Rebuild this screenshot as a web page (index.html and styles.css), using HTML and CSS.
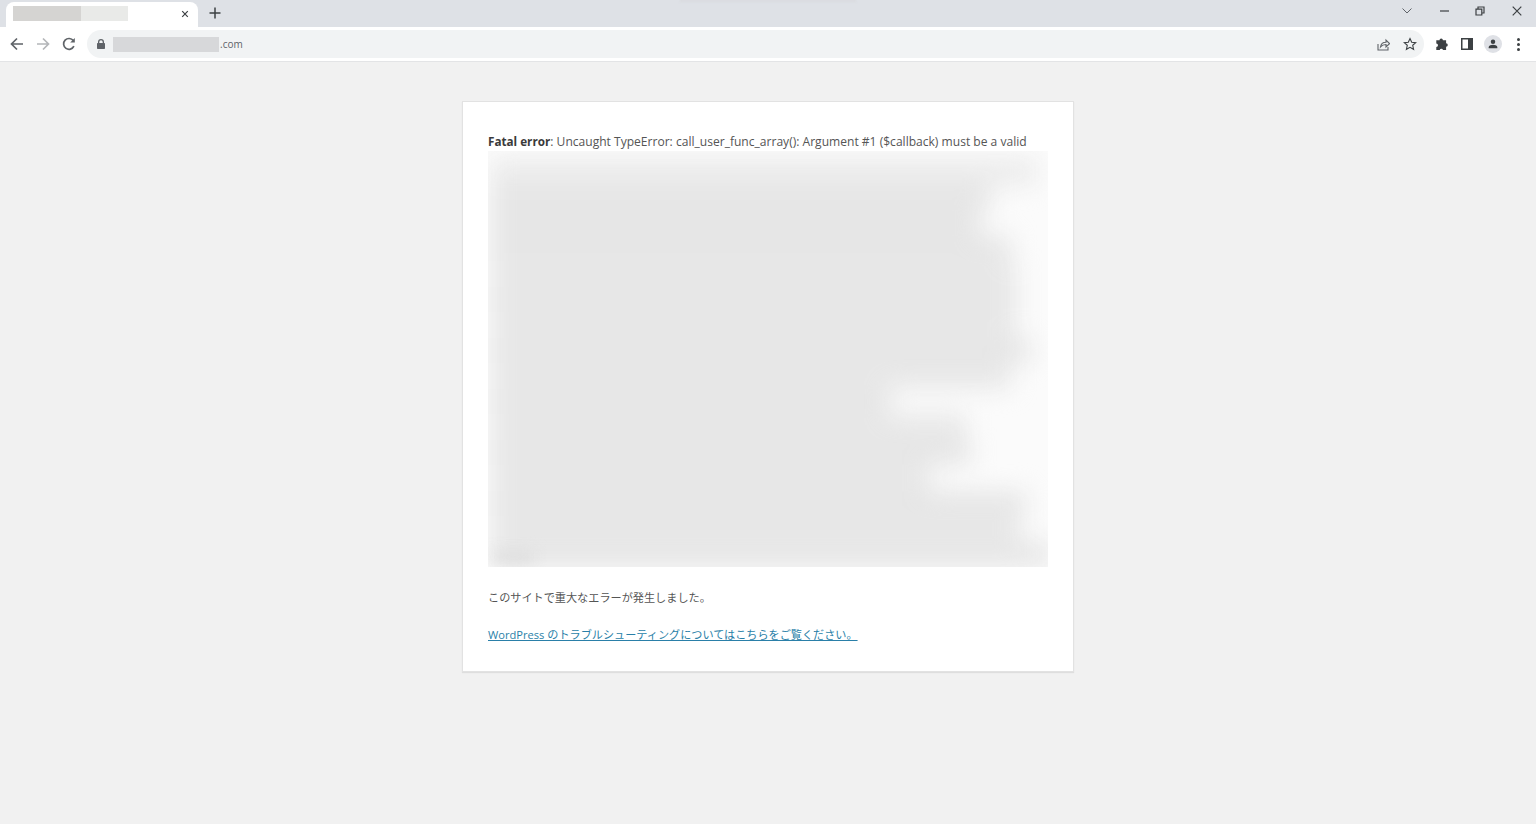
FILE: index.html
```html
<!DOCTYPE html>
<html lang="ja">
<head>
    <meta charset="UTF-8">
    <meta name="viewport" content="width=device-width, initial-scale=1.0">
    <title>WordPress › エラー</title>
    <link rel="stylesheet" href="styles.css">
</head>
<body>

<!-- Tab strip -->
<div class="tab-strip">
    <div class="strip-shade"></div>
    <div class="tab">
        <div class="tab-title"><span class="title-dark"></span><span class="title-light"></span></div>
        <svg class="tab-close" width="10" height="10" viewBox="0 0 10 10"><path d="M1.5 1.5l7 7M8.5 1.5l-7 7"/></svg>
    </div>
    <svg class="new-tab" width="12" height="12" viewBox="0 0 12 12"><path d="M6 .5v11M.5 6h11"/></svg>
    <div class="window-controls">
        <svg class="win-chevron" width="10" height="6" viewBox="0 0 10 6"><path d="M.5.5L5 5 9.500.5"/></svg>
        <svg class="win-min" width="9" height="2" viewBox="0 0 9 2"><path d="M0 1h9"/></svg>
        <svg class="win-restore" width="10" height="10" viewBox="0 0 10 10"><path d="M1 3.200h5.800V9H1zM3 3V1h6v6H7"/></svg>
        <svg class="win-close" width="10" height="10" viewBox="0 0 10 10"><path d="M.7.7l8.600 8.600M9.300.7L.7 9.300"/></svg>
    </div>
</div>

<!-- Toolbar -->
<div class="toolbar">
    <svg class="nav-icon" width="14" height="14" viewBox="0 0 14 14"><path d="M13 7H2M7 1.500L1.500 7 7 12.500"/></svg>
    <svg class="nav-icon nav-off" width="14" height="14" viewBox="0 0 14 14"><path d="M1 7h11M7 1.500L12.500 7 7 12.500"/></svg>
    <svg class="nav-icon" width="14" height="14" viewBox="0 0 14 14"><path d="M11.900 9.200A5.400 5.400 0 1 1 11.300 3.600"/><path class="solid" d="M12.800 1v4.600H8.200z"/></svg>
    <div class="omnibox">
        <svg class="lock" width="8" height="10" viewBox="0 0 8 10"><path d="M1 4V3a3 3 0 0 1 6 0v1h.3c.4 0 .7.3.7.7v4.600c0 .4-.3.7-.7.7H.7C.3 10 0 9.700 0 9.300V4.700C0 4.300.3 4 .7 4zm1.300 0h3.400V3a1.700 1.700 0 0 0-3.400 0z"/></svg>
        <span class="url-mask"></span><span class="url-end">.com</span>
        <div class="omni-actions">
            <svg class="omni-icon" width="13" height="13" viewBox="0 0 13 13"><path d="M1 6v6h10V9"/><path d="M3.500 9c.4-3 2.700-4.700 5.500-4.700V2l3.500 3.600L9 9V6.500C7 6.500 5 7.200 3.500 9z"/></svg>
            <svg class="omni-icon star" width="14" height="14" viewBox="0 0 14 14"><path d="M7 1.500l1.700 3.700 4 .4-3 2.700.9 4L7 10.300l-3.600 2 .9-4-3-2.700 4-.4z"/></svg>
        </div>
    </div>
    <svg class="puzzle" width="13" height="13" viewBox="0 0 13 13"><path d="M4.500 2.200a1.700 1.700 0 0 1 3.400 0h3.200v3.100a1.700 1.700 0 0 1 0 3.400V12H8a1.700 1.700 0 0 0-3.300 0H1.300V8.900a1.700 1.700 0 0 0 0-3.400V2.200z"/></svg>
    <svg class="panel" width="12" height="12" viewBox="0 0 12 12"><path fill-rule="evenodd" d="M0 0h12v12H0zM1.500 1.500v9H7v-9z"/></svg>
    <div class="avatar"><svg width="10" height="10" viewBox="0 0 12 12"><circle cx="6" cy="3.200" r="2.700"/><path d="M.8 11V9.600c0-1.700 3.400-2.600 5.200-2.600s5.200.9 5.200 2.600V11z"/></svg></div>
    <div class="menu-dots"><span></span><span></span><span></span></div>
</div>

<!-- WordPress error page -->
<div class="page">
    <div class="error-card">
        <p class="error-line"><b>Fatal error</b>: Uncaught TypeError: call_user_func_array(): Argument #1 ($callback) must be a valid</p>
        <div class="blur-block">
            <div class="blur-rows">
                <div class="blur-row light" style="width:545px"></div>
                <div class="blur-row" style="width:500px"></div>
                <div class="blur-row" style="width:490px"></div>
                <div class="blur-row" style="width:520px"></div>
                <div class="blur-row alt" style="width:525px"></div>
                <div class="blur-row" style="width:525px"></div>
                <div class="blur-row alt" style="width:525px"></div>
                <div class="blur-row" style="width:540px"></div>
                <div class="blur-row alt" style="width:520px"></div>
                <div class="blur-row" style="width:400px"></div>
                <div class="blur-row alt" style="width:475px"></div>
                <div class="blur-row" style="width:480px"></div>
                <div class="blur-row alt" style="width:440px"></div>
                <div class="blur-row" style="width:535px"></div>
                <div class="blur-row alt" style="width:530px"></div>
                <div class="blur-row" style="width:560px"></div>
            </div>
            <div class="blur-corner"></div>
        </div>
        <p class="notice">このサイトで重大なエラーが発生しました。</p>
        <p class="help"><a href="#">WordPress のトラブルシューティングについてはこちらをご覧ください。</a></p>
    </div>
</div>

</body>
</html>
```

FILE: styles.css
```css
* {
    margin: 0;
    padding: 0;
    box-sizing: border-box;
}
html, body {
    height: 100%;
    overflow: hidden;
}
body {
    font-family: 'Open Sans', 'Noto Sans CJK JP', sans-serif;
    background-color: #f1f1f1;
    color: #555;
    display: flex;
    flex-direction: column;
}
svg {
    display: block;
    flex: none;
}

/* Tab strip */
.tab-strip {
    height: 27px;
    flex: none;
    background-color: #dee1e6;
    display: flex;
    align-items: flex-end;
    padding-left: 6px;
    position: relative;
}
.strip-shade {
    position: absolute;
    top: -1px;
    left: 680px;
    width: 176px;
    height: 3px;
    background-color: #d9dbdf;
    filter: blur(1px);
}
.tab {
    width: 192px;
    height: 25px;
    background-color: #fff;
    border-radius: 8px 8px 0 0;
    display: flex;
    align-items: center;
    padding-left: 7px;
}
.tab-title {
    display: flex;
    height: 15px;
    margin-top: -2px;
}
.title-dark {
    width: 68px;
    background-color: #d5d4d2;
}
.title-light {
    width: 47px;
    background-color: #e9eae8;
}
.tab-close {
    margin-left: 53px;
    margin-top: -2px;
    fill: none;
    stroke: #3c4043;
    stroke-width: 1.500;
    width: 8px;
    height: 8px;
}
.new-tab {
    margin: 0 0 8px 11px;
    fill: none;
    stroke: #3c4043;
    stroke-width: 1.500;
}
.window-controls {
    margin-left: auto;
    height: 100%;
    display: flex;
    align-items: center;
    padding-bottom: 5px;
    padding-right: 14px;
    fill: none;
    stroke: #3c4043;
    stroke-width: 1.200;
}
.win-chevron {
    stroke: #5f6368;
    stroke-width: 1;
}
.win-min {
    margin-left: 28px;
}
.win-restore {
    margin-left: 26px;
}
.win-close {
    margin-left: 27px;
}

/* Toolbar */
.toolbar {
    height: 35px;
    flex: none;
    background-color: #fff;
    border-bottom: 1px solid #e3e4e6;
    display: flex;
    align-items: center;
    padding-left: 10px;
}
.nav-icon {
    margin-right: 12px;
    fill: none;
    stroke: #5f6368;
    stroke-width: 1.700;
}
.nav-icon.nav-off {
    stroke: #b4b6b9;
}
.nav-icon .solid {
    fill: #5f6368;
    stroke: none;
}
.omnibox {
    width: 1337px;
    height: 28px;
    margin-left: -1px;
    background-color: #f1f3f4;
    border-radius: 14px;
    display: flex;
    align-items: center;
    padding-left: 10px;
}
.lock {
    fill: #5f6368;
}
.url-mask {
    width: 106px;
    height: 15px;
    margin-left: 8px;
    background-color: #d7d8da;
}
.url-end {
    font-size: 10px;
    color: #5f6368;
    margin-left: 1px;
}
.omni-actions {
    margin-left: auto;
    display: flex;
    align-items: center;
    gap: 13px;
    padding-right: 7px;
}
.omni-icon {
    fill: none;
    stroke: #5f6368;
    stroke-width: 1.100;
}
.omni-icon.star {
    stroke: #3c4043;
}
.puzzle {
    margin-left: 11px;
    fill: #3c4043;
}
.panel {
    margin-left: 13px;
    fill: #3c4043;
}
.avatar {
    width: 18px;
    height: 18px;
    margin-left: 11px;
    border-radius: 50%;
    background-color: #dfe1e6;
    display: flex;
    align-items: center;
    justify-content: center;
    fill: #3c4043;
}
.menu-dots {
    margin-left: 15px;
    display: flex;
    flex-direction: column;
    gap: 2px;
}
.menu-dots span {
    width: 3px;
    height: 3px;
    border-radius: 50%;
    background-color: #3c4043;
}

/* Error card */
.page {
    flex: 1;
    display: flex;
    justify-content: center;
    align-items: flex-start;
    padding-top: 39px;
}
.error-card {
    width: 612px;
    height: 571px;
    background-color: #fff;
    border: 1px solid #e2e2e2;
    box-shadow: 0 1px 1px rgba(0, 0, 0, 0.08);
    padding: 30px 25px 0 25px;
    font-size: 12.070px;
}
.error-line {
    line-height: 18px;
    white-space: nowrap;
}
.error-line b {
    font-weight: 700;
    font-size: 11.700px;
    color: #3a3a3a;
}
.blur-block {
    width: 560px;
    height: 416px;
    background-color: #fbfbfb;
    overflow: hidden;
    position: relative;
}
.blur-rows {
    display: flex;
    flex-direction: column;
    height: 100%;
    padding-top: 8px;
    filter: blur(12px);
}
.blur-row {
    flex: 1;
    background-color: #e6e6e6;
    margin-left: 3px;
}
.blur-row.alt {
    background-color: #e8e8e8;
}
.blur-row.light {
    background-color: #ebebeb;
}
.blur-corner {
    position: absolute;
    left: 6px;
    bottom: 4px;
    width: 40px;
    height: 12px;
    background-color: #dedede;
    filter: blur(7px);
}
.notice {
    margin-top: 22px;
    line-height: 18px;
    font-size: 11.150px;
}
.help {
    margin-top: 19px;
    line-height: 18px;
    font-size: 11.130px;
}
.help a {
    color: #2a7fa8;
    text-decoration: underline;
}
```
